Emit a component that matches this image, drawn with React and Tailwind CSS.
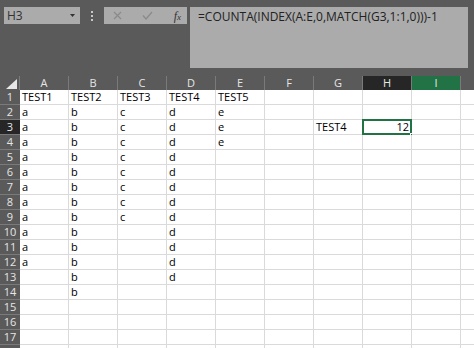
import React from 'react';

const COLS = ['A', 'B', 'C', 'D', 'E', 'F', 'G', 'H', 'I', ''];

const DATA = {
  1: ['TEST1', 'TEST2', 'TEST3', 'TEST4', 'TEST5'],
  2: ['a', 'b', 'c', 'd', 'e'],
  3: ['a', 'b', 'c', 'd', 'e', '', 'TEST4', '12'],
  4: ['a', 'b', 'c', 'd', 'e'],
  5: ['a', 'b', 'c', 'd'],
  6: ['a', 'b', 'c', 'd'],
  7: ['a', 'b', 'c', 'd'],
  8: ['a', 'b', 'c', 'd'],
  9: ['a', 'b', 'c', 'd'],
  10: ['a', 'b', '', 'd'],
  11: ['a', 'b', '', 'd'],
  12: ['a', 'b', '', 'd'],
  13: ['', 'b', '', 'd'],
  14: ['', 'b'],
};

const rows = Array.from({ length: 18 }, (_, i) => i + 1);

function Toolbar() {
  return (
    <div className="h-[76px] flex items-start gap-0 pl-1 pt-[7px]">
      {/* Name box */}
      <div className="w-[76px] h-[17px] bg-[#ababab] flex items-center justify-between pl-[3px] pr-[5px] text-[12px] text-[#333]">
        <span>H3</span>
        <svg width="5" height="3" viewBox="0 0 5 3"><path d="M0 0h5L2.5 3z" fill="#333" /></svg>
      </div>
      {/* Grip */}
      <div className="w-[24px] h-[17px] flex flex-col items-center justify-center gap-[2px]">
        <span className="w-[2px] h-[2px] bg-[#c8c8c8]" />
        <span className="w-[2px] h-[2px] bg-[#c8c8c8]" />
        <span className="w-[2px] h-[2px] bg-[#c8c8c8]" />
      </div>
      {/* Formula buttons */}
      <div className="w-[83px] h-[17px] bg-[#ababab] flex items-center justify-between pl-[9px] pr-[6px]">
        <svg width="9" height="9" viewBox="0 0 9 9"><path d="M1 1l7 7M8 1L1 8" stroke="#8a8a8a" strokeWidth="1.2" /></svg>
        <svg width="11" height="9" viewBox="0 0 11 9"><path d="M1 4.5l3 3.5 6-7" stroke="#8a8a8a" strokeWidth="1.2" fill="none" /></svg>
        <span className="text-[12px] italic text-[#333] leading-none" style={{ fontFamily: '"Liberation Serif", serif' }}>
          f<span className="text-[9px]">x</span>
        </span>
      </div>
      {/* Formula bar */}
      <div className="ml-[3px] w-[278px] h-[61px] bg-[#ababab] pl-2 pt-[1px] text-[12px] text-[#222]">
        =COUNTA(INDEX(A:E,0,MATCH(G3,1:1,0)))-1
      </div>
    </div>
  );
}

function HeaderRow() {
  return (
    <div className="flex h-[14px] text-[11px] text-[#e6e6e6]">
      <div className="w-[20px] shrink-0 relative border-r border-[#7a7a7a]">
        <svg className="absolute right-[2px] bottom-[1px]" width="11" height="10" viewBox="0 0 11 10">
          <path d="M11 0v10H0z" fill="#e8e8e8" />
        </svg>
      </div>
      {COLS.map((c, i) => (
        <div
          key={i}
          className={`w-[49px] shrink-0 flex items-center justify-center border-r border-[#7a7a7a] ${
            c === 'H' ? 'bg-[#262626]' : c === 'I' ? 'bg-[#217346]' : ''
          }`}
        >
          {c}
        </div>
      ))}
    </div>
  );
}

function Row({ n }) {
  const vals = DATA[n] || [];
  return (
    <div className="flex h-[15px]">
      <div
        className={`w-[20px] shrink-0 flex items-center justify-center text-[11px] border-b border-[#7a7a7a] ${
          n === 3 ? 'bg-[#262626] text-[#e6e6e6]' : 'text-[#e6e6e6]'
        }`}
      >
        {n}
      </div>
      {COLS.map((c, i) => {
        const v = vals[i] || '';
        const selected = n === 3 && c === 'H';
        return (
          <div
            key={i}
            className={`w-[49px] shrink-0 bg-white border-r border-b border-[#dadada] text-[11px] text-black flex items-center px-[2px] relative ${
              selected ? 'justify-end' : ''
            }`}
          >
            {v}
            {selected && (
              <>
                <span className="absolute -left-[1px] -top-[1px] -right-[1px] -bottom-[1px] border-2 border-[#217346]" />
                <span className="absolute -right-[3px] -bottom-[3px] w-[4px] h-[4px] bg-[#217346] border border-white" />
              </>
            )}
          </div>
        );
      })}
    </div>
  );
}

export default function App() {
  return (
    <div
      className="w-[474px] h-[348px] overflow-hidden bg-[#5a5a5a]"
      style={{ fontFamily: '"Open Sans", "Noto Sans", sans-serif' }}
    >
      <Toolbar />
      <HeaderRow />
      <div>
        {rows.map((n) => (
          <Row key={n} n={n} />
        ))}
      </div>
    </div>
  );
}
